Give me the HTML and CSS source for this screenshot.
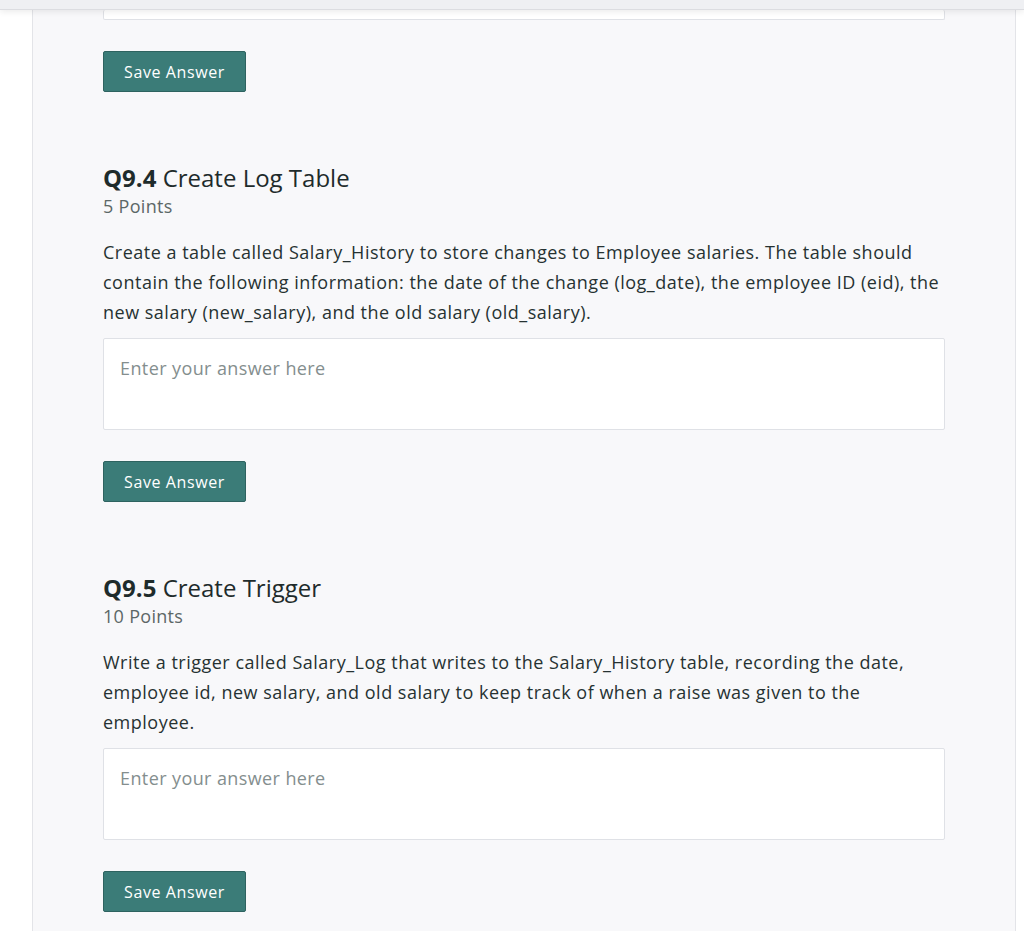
FILE: index.html
```html
<!DOCTYPE html>
<html lang="en">
<head>
    <meta charset="UTF-8">
    <meta name="viewport" content="width=device-width, initial-scale=1.0">
    <title>Assignment</title>
    <link rel="stylesheet" href="styles.css">
</head>
<body>
    <div class="topbar"></div>
    <div class="layout">
        <div class="gutter"></div>
        <main class="panel">
            <div class="answer answer-cut"></div>
            <button class="save-btn">Save Answer</button>

            <section class="question">
                <h2 class="q-title"><strong>Q9.4</strong> Create Log Table</h2>
                <div class="q-points">5 Points</div>
                <p class="q-text">Create a table called Salary_History to store changes to Employee salaries. The table should contain the following information: the date of the change (log_date), the employee ID (eid), the new salary (new_salary), and the old salary (old_salary).</p>
                <textarea class="answer" placeholder="Enter your answer here"></textarea>
                <button class="save-btn">Save Answer</button>
            </section>

            <section class="question">
                <h2 class="q-title"><strong>Q9.5</strong> Create Trigger</h2>
                <div class="q-points">10 Points</div>
                <p class="q-text">Write a trigger called Salary_Log that writes to the Salary_History table, recording the date, employee id, new salary, and old salary to keep track of when a raise was given to the employee.</p>
                <textarea class="answer" placeholder="Enter your answer here"></textarea>
                <button class="save-btn">Save Answer</button>
            </section>
        </main>
        <div class="gutter"></div>
    </div>
</body>
</html>
```

FILE: styles.css
```css
body {
    margin: 0;
    font-family: "Open Sans", sans-serif;
    background: #fff;
    color: #263232;
    overflow: hidden;
}
.topbar {
    height: 9px;
    background: #eff0f3;
    border-bottom: 1px solid #dcdde1;
    box-shadow: 0 2px 6px rgba(0, 0, 0, 0.08);
    position: relative;
    z-index: 2;
}
.layout {
    display: flex;
    height: 921px;
}
.gutter {
    width: 32px;
    flex-shrink: 0;
}
.gutter:last-child {
    width: 8px;
}
.panel {
    flex: 1;
    background: #f8f8fa;
    border-left: 1px solid #e3e4e8;
    border-right: 1px solid #e3e4e8;
    padding: 0 70px;
}
.answer {
    display: block;
    box-sizing: border-box;
    width: 842px;
    height: 92px;
    margin: 11px 0 0;
    padding: 17px 16px;
    background: #fff;
    border: 1px solid #dfe1e6;
    border-radius: 2px;
    font: inherit;
    font-size: 18px;
    letter-spacing: 0.4px;
    color: #263232;
    resize: none;
}
.answer::placeholder {
    color: #848e8e;
}
.answer-cut {
    height: 10px;
    margin-top: 0;
    padding: 0;
    border-top: none;
}
.save-btn {
    display: block;
    margin-top: 31px;
    width: 143px;
    height: 41px;
    background: #3b7c78;
    border: 1px solid #2e6360;
    border-radius: 2px;
    color: #fff;
    font: inherit;
    font-size: 16px;
    letter-spacing: 0.6px;
}
.question {
    margin-top: 71px;
}
.q-title {
    margin: 0;
    font-size: 24px;
    font-weight: 400;
    line-height: 30px;
    color: #1e2b2b;
}
.q-title strong {
    font-weight: 700;
}
.q-points {
    margin-top: 2px;
    font-size: 18px;
    line-height: 22px;
    letter-spacing: 0.3px;
    color: #5c6767;
}
.q-text {
    margin: 20px 0 0;
    font-size: 18px;
    line-height: 30px;
    letter-spacing: 0.5px;
}
```
